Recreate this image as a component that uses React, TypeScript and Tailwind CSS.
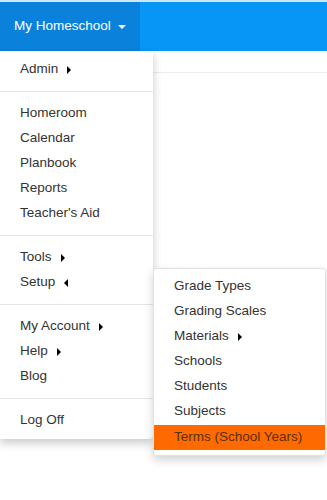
import React from "react"

type Item = { label: string; arrow?: "right" | "left" }

const groups: Item[][] = [
    [{ label: "Admin", arrow: "right" }],
    [
        { label: "Homeroom" },
        { label: "Calendar" },
        { label: "Planbook" },
        { label: "Reports" },
        { label: "Teacher's Aid" },
    ],
    [
        { label: "Tools", arrow: "right" },
        { label: "Setup", arrow: "left" },
    ],
    [{ label: "My Account", arrow: "right" }, { label: "Help", arrow: "right" }, { label: "Blog" }],
    [{ label: "Log Off" }],
]

const setupItems: Item[] = [
    { label: "Grade Types" },
    { label: "Grading Scales" },
    { label: "Materials", arrow: "right" },
    { label: "Schools" },
    { label: "Students" },
    { label: "Subjects" },
]

function Arrow({ dir }: { dir: "right" | "left" }) {
    return dir === "right" ? (
        <span className="ml-[9px] inline-block h-0 w-0 border-y-[4px] border-l-[4px] border-y-transparent border-l-black" />
    ) : (
        <span className="ml-[9px] inline-block h-0 w-0 border-y-[4px] border-r-[4px] border-y-transparent border-r-black" />
    )
}

function MenuRow({ item }: { item: Item }) {
    return (
        <div className="flex h-[25px] items-center px-5 text-[13.5px] text-[#333]">
            <span>{item.label}</span>
            {item.arrow && <Arrow dir={item.arrow} />}
        </div>
    )
}

export default function App() {
    return (
        <div
            className="relative h-[500px] w-[327px] overflow-hidden bg-white"
            style={{ fontFamily: '"Liberation Sans", Arial, sans-serif' }}
        >
            <div className="h-[2px] bg-[#cfe6f5]" />
            <div className="flex h-[49px] bg-[#0896f6]">
                <div className="flex w-[140px] items-center bg-[#0a82dc] pl-[14px] text-[13.5px] text-white">
                    <span>My Homeschool</span>
                    <span className="ml-[7px] inline-block h-0 w-0 border-x-[4px] border-t-[4px] border-x-transparent border-t-white" />
                </div>
            </div>
            <div className="h-[22px] border-b border-[#ececec]" />

            {/* main dropdown */}
            <div className="absolute left-0 top-[51px] w-[153px] rounded-br-[4px] bg-white py-[6px] shadow-[0_4px_10px_rgba(0,0,0,0.22)]">
                {groups.map((group, i) => (
                    <div key={i}>
                        {i > 0 && <div className="my-[9px] h-px bg-[#e5e5e5]" />}
                        {group.map((item) => (
                            <MenuRow key={item.label} item={item} />
                        ))}
                    </div>
                ))}
            </div>

            {/* setup submenu */}
            <div className="absolute left-[153px] top-[268px] w-[173px] rounded-[3px] border border-[#e2e2e2] bg-white py-[5px] shadow-[0_4px_10px_rgba(0,0,0,0.18)]">
                {setupItems.map((item) => (
                    <MenuRow key={item.label} item={item} />
                ))}
                <div className="mt-px flex h-[25px] items-center bg-[#ff6a00] px-5 text-[13.5px] text-[#5a2f0c]">
                    Terms (School Years)
                </div>
            </div>
        </div>
    )
}
